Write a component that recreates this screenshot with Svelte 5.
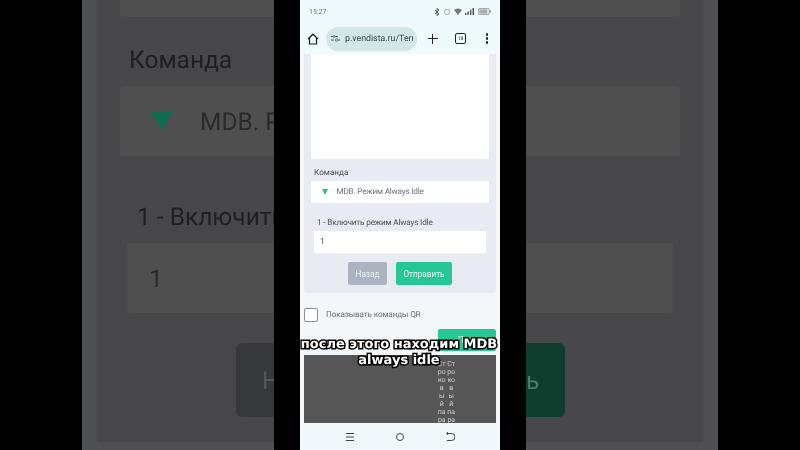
<script lang="ts">
  const paramCols = [
    ['Ст', 'ро', 'ко', 'в', 'ы', 'й', 'па', 'ра'],
    ['Ст', 'ро', 'ко', 'в', 'ы', 'й', 'па', 'ра'],
  ];
</script>

<div class="screen">
  <div class="side left">
    <div class="side-inner">
      <div class="b-top"></div>
      <div class="b-title">Команда</div>
      <div class="b-select">
        <span class="b-tri"></span>
        <span>MDB. Режим Always Idle</span>
      </div>
      <div class="b-label">1 - Включить режим Always Idle</div>
      <div class="b-input">1</div>
      <div class="b-btn grey">Назад</div>
    </div>
  </div>

  <div class="phone">
    <div class="status">
      <span>15:27</span>
      <div class="status-icons">
        <svg width="6" height="8" viewBox="0 0 6 8"><path d="M1 2l4 4-2 1.6V.4l2 1.6-4 4" fill="none" stroke="#444" stroke-width=".8"/></svg>
        <svg width="8" height="8" viewBox="0 0 8 8"><circle cx="4" cy="4" r="2.6" fill="none" stroke="#999" stroke-width=".8"/><path d="M1 1.5l1.2-1M7 1.5L5.8.5" stroke="#999" stroke-width=".7"/></svg>
        <svg width="8" height="7" viewBox="0 0 8 7"><path d="M0 2a6 6 0 0 1 8 0L4 7z" fill="#777"/></svg>
        <svg width="10" height="7" viewBox="0 0 10 7"><path d="M0 7h1.4V5H0zM2.4 7h1.4V3.500H2.400zM5 7h1.400V1.800H5zM7.500 7H9V0H7.500z" fill="#555"/></svg>
        <svg width="13" height="7" viewBox="0 0 13 7"><rect x=".4" y=".4" width="10.800" height="6.200" rx="1.400" fill="none" stroke="#777" stroke-width=".7"/><rect x="1.400" y="1.400" width="8" height="4.200" fill="#aaa"/><rect x="11.800" y="2.400" width="1" height="2.200" fill="#777"/></svg>
      </div>
    </div>

    <div class="toolbar">
      <svg class="home" width="12" height="12" viewBox="0 0 12 12"><path d="M1 6 6 1.200 11 6M2.500 5v6h7V5" fill="none" stroke="#1d1d1f" stroke-width="1.200"/></svg>
      <div class="url">
        <svg width="9" height="7" viewBox="0 0 9 7"><path d="M0 1.500h2M4 1.500h3M0 5h3M7 5h2" stroke="#44595a" stroke-width=".9"/><circle cx="3" cy="1.500" r="1" fill="none" stroke="#44595a" stroke-width=".7"/><circle cx="5.500" cy="5" r="1.200" fill="none" stroke="#44595a" stroke-width=".7"/></svg>
        <span class="url-text">p.vendista.ru/Terr</span>
      </div>
      <span class="plus"></span>
      <span class="tabs-count">18</span>
      <span class="dots"><i></i><i></i><i></i></span>
    </div>

    <div class="page">
      <div class="panel">
        <div class="textarea"></div>
        <div class="label">Команда</div>
        <div class="select">
          <span class="tri"></span>
          <span>MDB. Режим Always Idle</span>
        </div>
        <div class="label sub">1 - Включить режим Always Idle</div>
        <div class="input">1</div>
        <div class="actions">
          <button class="btn grey">Назад</button>
          <button class="btn green">Отправить</button>
        </div>
      </div>

      <div class="qr-row">
        <span class="checkbox"></span>
        <span>Показывать команды QR</span>
      </div>

      <div class="send-row"><button class="btn green send">Пуск</button></div>

      <div class="dark">
        {#each paramCols as col}
          <div class="col">
            {#each col as part}<span>{part}</span>{/each}
          </div>
        {/each}
      </div>
    </div>

    <div class="navbar">
      <svg width="10" height="10" viewBox="0 0 10 10"><path d="M1 1.500h8M1 5h8M1 8.500h8" stroke="#444" stroke-width="1"/></svg>
      <svg width="10" height="10" viewBox="0 0 10 10"><circle cx="5" cy="5" r="3.500" fill="none" stroke="#444" stroke-width="1"/></svg>
      <svg width="10" height="10" viewBox="0 0 10 10"><path d="M3 .2 1.500 1.500 3 2.800M2 1.500h4.500a3 3 0 0 1 0 7H2" fill="none" stroke="#444" stroke-width="1"/></svg>
    </div>

    <div class="caption">после этого находим MDB<br />always idle</div>
  </div>

  <div class="side right">
    <div class="side-inner">
      <div class="b-top"></div>
      <div class="b-title"></div>
      <div class="b-select"></div>
      <div class="b-label"></div>
      <div class="b-input"></div>
      <div class="b-btn green"><span>ь</span></div>
    </div>
  </div>
</div>

<style>
  :global(body) {
    margin: 0;
    background: #000;
  }

  .screen {
    position: relative;
    display: flex;
    justify-content: center;
    gap: 26px;
    width: 800px;
    height: 450px;
    overflow: hidden;
    background: #000;
    font-family: Roboto, "Noto Sans", sans-serif;
    text-rendering: geometricPrecision;
  }

  /* blurred, dimmed copies of the page either side of the phone */
  .side {
    width: 192px;
    height: 450px;
    overflow: hidden;
    background: #4f5052;
    filter: blur(0.7px);
  }
  .side-inner {
    display: flex;
    flex-direction: column;
    width: 606px;
    height: 442px;
    background: #47474a;
    color: #1f1f22;
  }
  .left .side-inner { margin-left: 15px; padding-left: 23px; box-sizing: border-box; }
  .right .side-inner {
    margin-left: -429px;
    padding: 0 23px;
    box-sizing: border-box;
  }

  .b-top {
    flex: none;
    height: 17px;
    background: #4f4f4f;
    border-radius: 0 0 3px 3px;
  }
  .b-title {
    flex: none;
    height: 69px;
    padding: 26px 0 0 9px;
    box-sizing: border-box;
    font-size: 24.500px;
    line-height: 34px;
    white-space: nowrap;
  }
  .b-select {
    flex: none;
    display: flex;
    align-items: center;
    gap: 27px;
    height: 70px;
    padding-left: 31px;
    box-sizing: border-box;
    background: #4f4f4f;
    border-radius: 3px;
    color: #2a2a2c;
    font-size: 24.500px;
    white-space: nowrap;
  }
  .b-tri {
    flex: none;
    width: 0;
    height: 0;
    border-left: 11px solid transparent;
    border-right: 11px solid transparent;
    border-top: 18px solid #0f6e50;
  }
  .b-label {
    flex: none;
    height: 87px;
    padding: 44px 0 0 17px;
    box-sizing: border-box;
    font-size: 24.500px;
    line-height: 34px;
    white-space: nowrap;
  }
  .b-input {
    flex: none;
    display: flex;
    align-items: center;
    height: 70px;
    margin: 0 7px;
    padding-left: 22px;
    box-sizing: border-box;
    background: #4f4f4f;
    border-radius: 3px;
    font-size: 24.500px;
    color: #2a2a2c;
  }
  .b-btn {
    flex: none;
    display: flex;
    align-items: center;
    width: 120px;
    height: 74px;
    margin: 30px 0 0 116px;
    padding-left: 26px;
    box-sizing: border-box;
    border-radius: 6px;
    font-size: 24.500px;
  }
  .b-btn.grey { background: #37383c; color: #56575b; }
  .b-btn.green {
    width: 170px;
    margin-left: 275px;
    padding-left: 131px;
    background: #0e3f2e;
    color: #4f7a68;
  }

  .phone {
    position: relative;
    display: flex;
    flex-direction: column;
    flex: none;
    width: 200px;
    height: 450px;
    overflow: hidden;
    background: #f4f7f9;
    color: #55585e;
    font-size: 8.200px;
    filter: blur(0.4px);
  }

  .status {
    flex: none;
    display: flex;
    align-items: center;
    justify-content: space-between;
    height: 23px;
    padding: 0 9px 0 9px;
    background: #eefafc;
    color: #6f7678;
    font-size: 7px;
  }
  .status-icons {
    display: flex;
    align-items: center;
    gap: 3px;
  }

  .toolbar {
    flex: none;
    display: flex;
    align-items: center;
    height: 31px;
    padding-left: 7px;
    background: #eefafc;
  }
  .home { flex: none; }
  .url {
    flex: none;
    display: flex;
    align-items: center;
    gap: 5px;
    width: 91px;
    height: 24px;
    margin-left: 7px;
    padding: 0 4px 0 5px;
    box-sizing: border-box;
    background: #d3e7e7;
    border-radius: 12px;
    color: #39474a;
    font-size: 8.800px;
    white-space: nowrap;
  }
  .url svg { flex: none; }
  .url-text {
    flex: 1;
    min-width: 0;
    overflow: hidden;
  }
  .plus {
    position: relative;
    flex: none;
    width: 10px;
    height: 10px;
    margin-left: 11px;
    background:
      linear-gradient(#1f2224, #1f2224) center / 10px 1.300px no-repeat,
      linear-gradient(#1f2224, #1f2224) center / 1.300px 10px no-repeat;
  }
  .tabs-count {
    flex: none;
    display: flex;
    align-items: center;
    justify-content: center;
    width: 9px;
    height: 9px;
    margin-left: 17px;
    border: 1.200px solid #1f2224;
    border-radius: 2px;
    color: #1f2224;
    font-size: 5px;
  }
  .dots {
    flex: none;
    display: flex;
    flex-direction: column;
    gap: 1.800px;
    margin-left: 20px;
  }
  .dots i {
    width: 2.200px;
    height: 2.200px;
    border-radius: 50%;
    background: #1f2224;
  }

  .page {
    flex: 1;
    min-height: 0;
    display: flex;
    flex-direction: column;
    padding: 0 4px;
    overflow: hidden;
  }

  .panel {
    flex: none;
    display: flex;
    flex-direction: column;
    height: 239px;
    padding: 0 7px;
    box-sizing: border-box;
    background: #e8ebf2;
    border-radius: 0 0 3px 3px;
  }
  .textarea {
    flex: none;
    height: 105px;
    background: #fff;
  }
  .label {
    flex: none;
    padding: 9px 0 0 3px;
    height: 22px;
    box-sizing: border-box;
    line-height: 11px;
    font-size: 8.200px;
    color: #4a4d54;
  }
  .label.sub {
    height: 28px;
    padding: 15px 0 0 6px;
    letter-spacing: -0.17px;
  }
  .select {
    flex: none;
    display: flex;
    align-items: center;
    gap: 9px;
    height: 22px;
    padding-left: 10.500px;
    box-sizing: border-box;
    background: #fff;
    color: #6d7077;
    letter-spacing: -0.2px;
  }
  .tri {
    flex: none;
    width: 0;
    height: 0;
    border-left: 3.500px solid transparent;
    border-right: 3.500px solid transparent;
    border-top: 6px solid #2bbf95;
  }
  .input {
    flex: none;
    display: flex;
    align-items: center;
    height: 22px;
    margin: 0 3px;
    padding-left: 6px;
    box-sizing: border-box;
    background: #fff;
    font-size: 8.500px;
    color: #55585e;
  }
  .actions {
    flex: none;
    display: flex;
    justify-content: center;
    gap: 9px;
    margin-top: 9px;
  }
  .btn {
    height: 23px;
    padding: 0;
    border: 0;
    border-radius: 2px;
    color: #e6f6f1;
    font: inherit;
  }
  .btn.grey {
    width: 39px;
    background: #aeb3c1;
  }
  .btn.green {
    width: 56px;
    background: #25c795;
  }

  .qr-row {
    flex: none;
    display: flex;
    align-items: center;
    gap: 8px;
    height: 14px;
    margin-top: 15px;
    color: #6a6d74;
    letter-spacing: -0.15px;
  }
  .checkbox {
    flex: none;
    width: 14px;
    height: 14px;
    box-sizing: border-box;
    background: #fff;
    border: 1px solid #8b8e94;
    border-radius: 2px;
  }

  .send-row {
    flex: none;
    display: flex;
    justify-content: flex-end;
    margin-top: 7px;
  }
  .btn.send {
    width: 58px;
    height: 22px;
    color: #bff0e0;
  }

  .dark {
    flex: none;
    display: flex;
    justify-content: flex-end;
    height: 68px;
    margin-top: 4px;
    padding: 5px 40px 0 0;
    box-sizing: border-box;
    overflow: hidden;
    background: #565656;
  }
  .col {
    display: flex;
    flex-direction: column;
    align-items: center;
    width: 9.500px;
    color: #cfcfcf;
    font-size: 7px;
    line-height: 8px;
  }

  .navbar {
    flex: none;
    display: flex;
    align-items: center;
    justify-content: space-between;
    height: 27px;
    padding: 0 45px;
    background: #eff8fb;
  }

  .caption {
    position: absolute;
    left: -1px;
    right: 1px;
    top: 337px;
    color: #fff;
    font-family: "DejaVu Sans", sans-serif;
    font-size: 13px;
    font-weight: 700;
    line-height: 16px;
    text-align: center;
    white-space: nowrap;
    -webkit-text-stroke: 3px #000;
    paint-order: stroke fill;
  }
</style>
